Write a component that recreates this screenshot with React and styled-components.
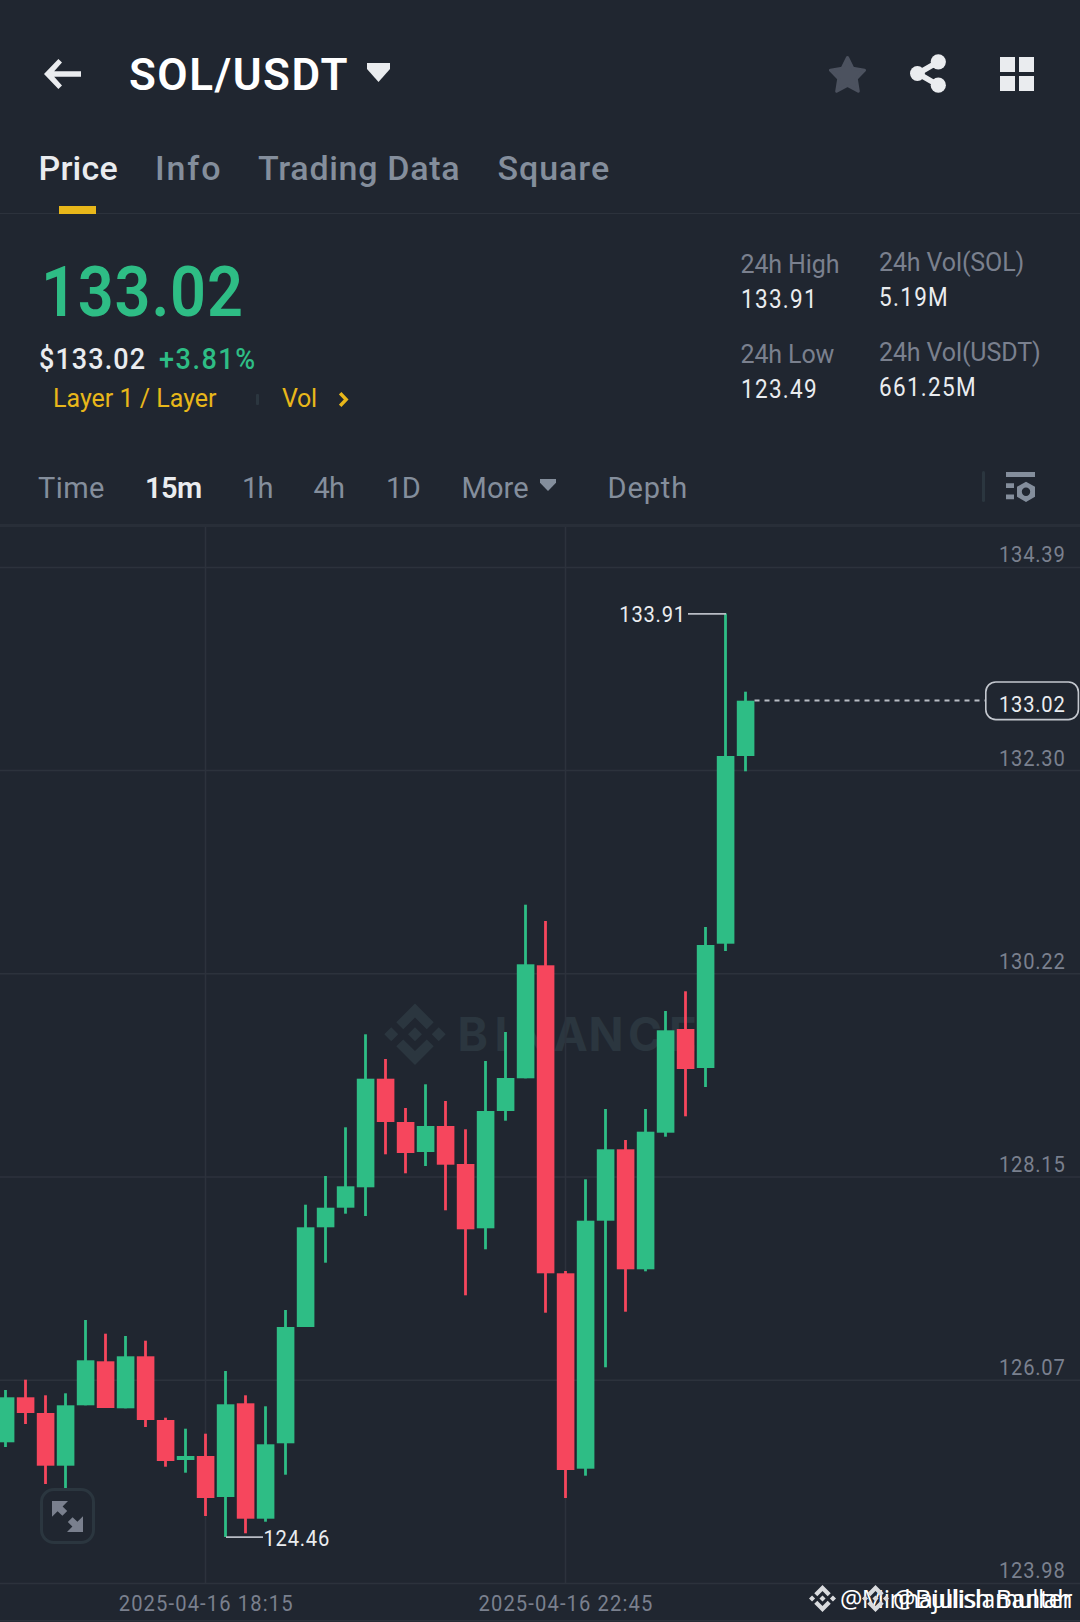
import React from "react";
import styled, { createGlobalStyle } from "styled-components";

const c = {
  bg: "#202630",
  line: "#2c323c",
  text: "#eaecef",
  muted: "#848e9c",
  dim: "#7a808e",
  faint: "#2b363f",
  green: "#2ebd85",
  red: "#f6465d",
  yellow: "#e8b71a",
};

const Global = createGlobalStyle`
  * { box-sizing: border-box; }
  body { margin: 0; background: ${c.bg}; }
  button { all: unset; box-sizing: border-box; cursor: pointer; }
  svg { display: block; flex: none; }
`;

const Screen = styled.main`
  position: relative;
  display: flex;
  flex-direction: column;
  width: 1080px;
  height: 1622px;
  overflow: hidden;
  background: ${c.bg};
  color: ${c.text};
  font-family: Roboto, "Liberation Sans", sans-serif;
  white-space: nowrap;
`;

/* Slightly condensed numerals with open tracking */
const Digits = styled.span`
  display: inline-block;
  transform: scaleX(0.9);
  transform-origin: left center;
  letter-spacing: ${(p) => p.$track || 0}px;
`;

/* ---------- header ---------- */
const Header = styled.header`
  display: flex;
  align-items: center;
  height: 132px;
  padding: 16px 46px 0 44px;
`;

const Pair = styled.h1`
  display: flex;
  align-items: center;
  gap: 20px;
  margin: 2px 0 0 48px;
  color: #fff;
  font-size: 44px;
  font-weight: 600;
  line-height: 52px;
  letter-spacing: 1.5px;
`;

const PairCaret = styled.svg`
  margin: -5px 0 0 -1.5px;
`;

const Actions = styled.div`
  display: flex;
  align-items: center;
  margin-left: auto;
`;

const Action = styled.button`
  display: flex;
  margin: ${(p) => p.$lift || 0}px 0 0 ${(p) => p.$gap || 0}px;
`;

/* ---------- tabs ---------- */
const Tabs = styled.nav`
  display: grid;
  grid-template-columns: 116.5px 103px 239.5px auto;
  justify-content: start;
  height: 82px;
  padding: 16px 38.5px 0;
  border-bottom: 1.5px solid ${c.line};
`;

const Tab = styled.button`
  display: flex;
  flex-direction: column;
  justify-content: space-between;
  color: ${(p) => (p.$active ? c.text : c.muted)};
  font-size: 34px;
  font-weight: 500;
  line-height: 40px;
  letter-spacing: ${(p) => p.$track || 0}px;
`;

const TabMark = styled.span`
  width: 37px;
  height: 8px;
  margin: 0 0 -1px 20.5px;
  background: ${c.yellow};
`;

/* ---------- price summary ---------- */
const Summary = styled.section`
  display: flex;
  justify-content: space-between;
  height: 239px;
  padding: 0 38px;
`;

const Quote = styled.div`
  display: flex;
  flex-direction: column;
  padding-top: 48px;
`;

const LastPrice = styled.div`
  padding-left: 3px;
  color: ${c.green};
  font-size: 70px;
  font-weight: 600;
  line-height: 60px;
`;

const FiatRow = styled.div`
  display: flex;
  gap: 1px;
  margin-top: 19px;
  padding-left: 0.5px;
  font-size: 30px;
  font-weight: 500;
  line-height: 36px;
`;

const Change = styled(Digits)`
  color: ${c.green};
`;

const Tags = styled.div`
  display: flex;
  align-items: center;
  margin-top: 5px;
  padding-left: 15px;
  color: ${c.yellow};
  font-size: 25px;
  line-height: 34px;
`;

const TagName = styled.span`
  width: ${(p) => p.$width}px;
  letter-spacing: ${(p) => p.$track || 0}px;
`;

const TagRule = styled.span`
  width: 3px;
  height: 11px;
  margin-right: 23px;
  border-radius: 1px;
  background: ${c.faint};
`;

const Stats = styled.div`
  display: flex;
  width: 301.5px;
  padding-top: 31px;
`;

const StatColumn = styled.dl`
  display: flex;
  flex-direction: column;
  gap: 20px;
  width: ${(p) => p.$width}px;
  margin: ${(p) => p.$drop || 0}px 0 0;
`;

const StatLabel = styled.dt`
  color: ${c.dim};
  font-size: 25px;
  line-height: 35px;
  letter-spacing: -0.12px;
`;

const StatValue = styled.dd`
  margin: 0;
  color: ${c.text};
  font-size: 25px;
  line-height: 35px;
`;

/* ---------- interval bar ---------- */
const Intervals = styled.nav`
  display: flex;
  align-items: center;
  height: 74px;
  padding: 0 45px 1px 38px;
  border-bottom: 3px solid #282e38;
`;

const Interval = styled.button`
  display: flex;
  align-items: center;
  width: ${(p) => p.$width}px;
  color: ${(p) => (p.$active ? c.text : c.muted)};
  font-size: 29px;
  font-weight: ${(p) => (p.$active ? 600 : 400)};
  line-height: 36px;
  letter-spacing: ${(p) => p.$track || 0}px;
`;

const MoreCaret = styled.svg`
  margin: -6px 0 0 11px;
`;

const IntervalRule = styled.span`
  width: 3px;
  height: 31px;
  margin: -3px 21px 0 auto;
  border-radius: 2px;
  background: ${c.faint};
`;

/* ---------- chart ---------- */
const ChartArea = styled.section`
  position: relative;
  flex: 1;
`;

const ExpandButton = styled.button`
  position: absolute;
  left: 40px;
  bottom: 78px;
  display: flex;
  align-items: center;
  justify-content: center;
  width: 55px;
  height: 56px;
  border: 3px solid ${c.faint};
  border-radius: 14px;
  background: ${c.bg};
`;

const Credit = styled.div`
  position: absolute;
  right: 8px;
  bottom: 8px;
  display: flex;
  align-items: center;
  gap: 4px;
  color: #fff;
  font: 500 25px/31px "Open Sans", "Noto Sans", sans-serif;
  letter-spacing: ${(p) => p.$track || 0}px;
`;

const CHART_TOP = 527;

/* high, body top, body bottom, low, rising */
const candles = [
  [1390, 1397.3, 1442.3, 1447, 1],
  [1379.7, 1397.3, 1413, 1424, 0],
  [1395.3, 1413, 1465.7, 1484, 0],
  [1393.3, 1405.3, 1465.7, 1489, 1],
  [1320, 1360.3, 1405.3, 1405.3, 1],
  [1333.7, 1361.3, 1408, 1408, 0],
  [1336, 1356.3, 1408.3, 1408.3, 1],
  [1340.7, 1356.3, 1420, 1427, 0],
  [1417.7, 1420, 1461, 1466.7, 0],
  [1428.7, 1456, 1460, 1472.7, 1],
  [1433.7, 1456, 1498, 1516, 0],
  [1371, 1404.3, 1497, 1537, 1],
  [1395.3, 1403.3, 1518.7, 1533.3, 0],
  [1406.3, 1444.3, 1518.7, 1521.7, 1],
  [1310, 1327, 1443.3, 1474.7, 1],
  [1204.7, 1227.3, 1327, 1327, 1],
  [1176, 1207.7, 1227.3, 1262.7, 1],
  [1127.3, 1186.3, 1207.7, 1213.7, 1],
  [1034.3, 1078.7, 1187.3, 1216, 1],
  [1059, 1078.7, 1122, 1154.3, 0],
  [1108, 1122, 1153, 1173.3, 0],
  [1084.3, 1126, 1152, 1166, 1],
  [1101, 1126, 1164.7, 1210.3, 0],
  [1129.3, 1164, 1229.3, 1295.3, 0],
  [1061, 1111, 1228.3, 1249.3, 1],
  [1032, 1078, 1111, 1120.7, 1],
  [904.7, 964.3, 1078.3, 1078.3, 1],
  [921, 965.3, 1273.3, 1312.7, 0],
  [1271, 1273.3, 1470, 1498, 0],
  [1179.3, 1220.7, 1468.7, 1475.7, 1],
  [1109, 1149.3, 1220.7, 1367.3, 1],
  [1140, 1149.3, 1269.3, 1311.7, 0],
  [1109, 1131.7, 1269.3, 1271.3, 1],
  [1011, 1030.3, 1132.7, 1136.7, 1],
  [991.3, 1029, 1069, 1116.3, 0],
  [927, 945, 1068, 1087, 1],
  [613.5, 756, 943.7, 951, 1],
  [691.7, 700.7, 756, 771.3, 1],
];

const levels = [
  [567.4, "134.39"],
  [770.6, "132.30"],
  [973.8, "130.22"],
  [1177, "128.15"],
  [1380.3, "126.07"],
  [1583.4, "123.98"],
];

const LogoShape = () => (
  <>
    <path d="M30 0 48.3 18.3 41.5 25 30 13.6 18.5 25 11.7 18.3Z" />
    <path d="M30 60 48.3 41.7 41.5 35 30 46.4 18.5 35 11.7 41.7Z" />
    <path d="M6.8 23.2 13.6 30 6.8 36.8 0 30ZM53.2 23.2 60 30 53.2 36.8 46.4 30ZM30 23.2 36.8 30 30 36.8 23.2 30Z" />
  </>
);

const Logo = ({ size, color }) => (
  <svg width={size} height={size} viewBox="0 0 60 60" fill={color}>
    <LogoShape />
  </svg>
);

const Label = styled.text`
  fill: ${(p) => (p.$bright ? c.text : c.dim)};
  font-size: 22.4px;
  letter-spacing: ${(p) => p.$track}px;
`;

const ChartText = ({ x, y, bright, track = 0.85, children }) => (
  <Label transform={`translate(${x} ${y}) scale(0.9 1)`} $bright={bright} $track={track}>
    {children}
  </Label>
);

const BrandText = styled.text`
  fill: ${c.faint};
  font: 700 46px Inter, sans-serif;
`;

const Chart = () => (
  <svg width="1080" height="1095" viewBox={`0 ${CHART_TOP} 1080 1095`}>
    <g transform="translate(384.3 1003.6) scale(1.023)" fill={c.faint}>
      <LogoShape />
    </g>
    <BrandText x="457.5 494.5 514 553.5 588.5 628 669" y="1051">
      BINANCE
    </BrandText>

    <g stroke={c.line} strokeWidth="1.5">
      {levels.map(([y]) => (
        <line key={y} x1="0" x2="1080" y1={y} y2={y} />
      ))}
      <line x1="205.5" x2="205.5" y1={CHART_TOP} y2="1583" />
      <line x1="565.5" x2="565.5" y1={CHART_TOP} y2="1583" />
      <line x1="0" x2="1080" y1="1620.8" y2="1620.8" />
    </g>

    {candles.map(([hi, top, bottom, lo, up], i) => (
      <g key={i} fill={up ? c.green : c.red}>
        <rect x={4.1 + i * 20} y={hi} width="2.8" height={lo - hi} />
        <rect x={-3.2 + i * 20} y={top} width="17.6" height={bottom - top} />
      </g>
    ))}

    <g stroke="#b9bdc5" strokeWidth="1.8">
      <line x1="688" x2="726" y1="613.8" y2="613.8" />
      <line x1="226" x2="263" y1="1537.2" y2="1537.2" />
      <line x1="754.5" x2="985" y1="700.5" y2="700.5" strokeDasharray="5 5" />
    </g>
    <ChartText x={619.3} y={622.4} bright>133.91</ChartText>
    <ChartText x={263.5} y={1546} bright>124.46</ChartText>

    {levels.map(([y, label]) => (
      <ChartText key={label} x={999} y={y - 5}>
        {label}
      </ChartText>
    ))}
    <rect x="985.8" y="682" width="92.6" height="37.6" rx="10" fill={c.bg} stroke="#c3c7ce" strokeWidth="1.6" />
    <ChartText x={999} y={712.3} bright>133.02</ChartText>

    <ChartText x={118.7} y={1611.4} track={1.25}>2025-04-16 18:15</ChartText>
    <ChartText x={478.5} y={1611.4} track={1.25}>2025-04-16 22:45</ChartText>
  </svg>
);

const Stat = ({ label, value }) => (
  <div>
    <StatLabel>{label}</StatLabel>
    <StatValue>
      <Digits $track={1.45}>{value}</Digits>
    </StatValue>
  </div>
);

export default function App() {
  return (
    <Screen>
      <Global />
      <Header>
        <Action aria-label="Back">
          <svg width="37" height="30" viewBox="0 0 37 30" fill={c.text}>
            <path d="M0 15 14.4 0 18 3.6 10.2 12.2H37V17.8H10.2L18 26.4 14.4 30Z" />
          </svg>
        </Action>
        <Pair>
          SOL/USDT
          <PairCaret width="23" height="19" viewBox="0 0 23 19" fill={c.text}>
            <path d="M0 0H23V6L11.5 19 0 6Z" />
          </PairCaret>
        </Pair>
        <Actions>
          <Action aria-label="Favourite">
            <svg width="38" height="39" viewBox="0 0 38 39" fill="#4c525f" stroke="#4c525f" strokeWidth="3" strokeLinejoin="round">
              <path d="M18.5 2.5 23.8 13.2 35.5 15.2 27.3 23.7 29.3 36.2 18.5 30.5 7.7 36.2 9.7 23.7 1.5 15.2 13.2 13.2Z" />
            </svg>
          </Action>
          <Action aria-label="Share" $gap={43} $lift={-1}>
            <svg width="37" height="39" viewBox="0 0 37 39" fill={c.text}>
              <path d="M8 19.5 28.5 7.7M8 19.5 28.5 31.3" stroke={c.text} strokeWidth="5.5" />
              <circle cx="7.4" cy="19.5" r="7.4" />
              <circle cx="28.3" cy="7.8" r="7.6" />
              <circle cx="28.3" cy="31.2" r="7.6" />
            </svg>
          </Action>
          <Action aria-label="Layout" $gap={53} $lift={-1}>
            <svg width="34" height="34" viewBox="0 0 34 34" fill={c.text}>
              <path d="M0 0H15V15H0ZM19 0H34V15H19ZM0 19H15V34H0ZM19 19H34V34H19Z" />
            </svg>
          </Action>
        </Actions>
      </Header>

      <Tabs>
        <Tab $active $track={0.2}>
          Price
          <TabMark />
        </Tab>
        <Tab $track={1.9}>Info</Tab>
        <Tab $track={0.7}>Trading Data</Tab>
        <Tab $track={0.95}>Square</Tab>
      </Tabs>

      <Summary>
        <Quote>
          <LastPrice>
            <Digits $track={0.9}>133.02</Digits>
          </LastPrice>
          <FiatRow>
            <Digits $track={1.2}>$133.02</Digits>
            <Change $track={1.7}>+3.81%</Change>
          </FiatRow>
          <Tags>
            <TagName $width={203}>Layer 1 / Layer</TagName>
            <TagRule />
            <TagName $width={56.5} $track={-0.3}>Vol</TagName>
            <svg width="10" height="15" viewBox="0 0 10 15" fill="none" stroke={c.yellow} strokeWidth="3.4">
              <path d="M1.2 1.2 7.2 7.5 1.2 13.8" />
            </svg>
          </Tags>
        </Quote>
        <Stats>
          <StatColumn $width={138.5} $drop={2}>
            <Stat label="24h High" value="133.91" />
            <Stat label="24h Low" value="123.49" />
          </StatColumn>
          <StatColumn>
            <Stat label="24h Vol(SOL)" value="5.19M" />
            <Stat label="24h Vol(USDT)" value="661.25M" />
          </StatColumn>
        </Stats>
      </Summary>

      <Intervals>
        <Interval $width={107} $track={0.4}>Time</Interval>
        <Interval $width={97} $track={-0.6} $active>15m</Interval>
        <Interval $width={71.5} $track={-0.9}>1h</Interval>
        <Interval $width={72.5} $track={-0.8}>4h</Interval>
        <Interval $width={75.5} $track={-0.5}>1D</Interval>
        <Interval $width={146} $track={0.13}>
          More
          <MoreCaret width="16" height="12" viewBox="0 0 16 12" fill={c.muted}>
            <path d="M0 0H16V3.8L8 12 0 3.8Z" />
          </MoreCaret>
        </Interval>
        <Interval $track={0.88}>Depth</Interval>
        <IntervalRule />
        <Action aria-label="Chart settings" $lift={-3}>
          <svg width="29" height="30" viewBox="0 0 29 30" fill={c.muted}>
            <path d="M0 0H29V5H0ZM0 11.3H8V16H0ZM0 22.5H8V27.2H0Z" />
            <path
              fillRule="evenodd"
              d="M20 9.8 29 14.8V24.8L20 29.9 11 24.8V14.8ZM20 15.6A4.2 4.2 0 1 0 20 24 4.2 4.2 0 1 0 20 15.6Z"
            />
          </svg>
        </Action>
      </Intervals>

      <ChartArea>
        <Chart />
        <ExpandButton aria-label="Expand chart">
          <svg width="31" height="31" viewBox="0 0 31 31" fill={c.dim}>
            <path d="M0 0H16L10.6 5.4 15.2 10 10.4 14.8 5.6 10.2 0 15.8Z" />
            <path d="M31 31H15L20.4 25.6 15.8 21 20.6 16.2 25.4 20.8 31 15.2Z" />
          </svg>
        </ExpandButton>
        <Credit $track={-0.55}>
          <Logo size={27} color="#d9dbde" />
          @Minhajulislamullah
        </Credit>
        <Credit $track={-0.4}>
          <Logo size={27} color="#d9dbde" />
          @Bullish Banter
        </Credit>
      </ChartArea>
    </Screen>
  );
}
